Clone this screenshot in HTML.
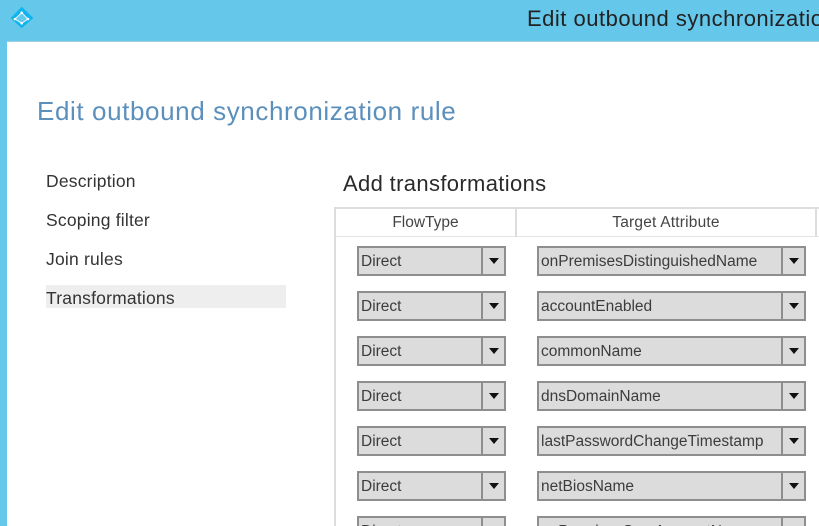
<!DOCTYPE html>
<html><head><meta charset="utf-8"><style>
html,body{margin:0;padding:0;width:819px;height:526px;overflow:hidden}
body{background:#fff;font-family:"Liberation Sans",sans-serif;color:#333}
#p{position:absolute;left:0;top:0;width:819px;height:526px;overflow:hidden;background:#fff;filter:blur(.35px)}
#p div{position:absolute;white-space:nowrap}
#p .c{box-sizing:border-box;height:30px;background:#dcdcdc;border:2px solid #8e8e8e}
#p .w1{left:357px;width:149px}
#p .w2{left:537px;width:269px}
#p .t{font-size:15.5px;line-height:27px;left:2px;top:0;color:#3c3c3c}
#p .d{top:0;bottom:0;width:2px;background:#8e8e8e}
#p .w1 .d{left:122px}
#p .w2 .d{left:242px}
#p .a{width:0;height:0;border-left:5px solid transparent;border-right:5px solid transparent;border-top:6px solid #111;top:10px}
#p .w1 .a{left:130px}
#p .w2 .a{left:250px}
#p .n{font-size:17.5px;letter-spacing:.2px;left:46px;color:#333;line-height:20px}
#p .h{top:214px;text-align:center;font-size:15.5px;line-height:18px;color:#444}
</style></head><body><div id="p">
<div style="left:0;top:0;width:819px;height:41px;background:#65c7ea"></div>
<div style="left:0;top:41px;width:7px;height:485px;background:#65c7ea"></div>
<div style="left:7px;top:41px;width:812px;height:1px;background:#a6cfdf"></div>
<svg style="position:absolute;left:10px;top:6px" width="24" height="24" viewBox="0 0 24 24"><path d="M11.700 .700L23.300 12 11.700 22.300 .700 12Z" fill="#0eb4ee"/><path d="M11.700 6.700L18 13 11.700 17.300 5 13Z" fill="#66c8ea" stroke="#e6f8ff" stroke-width="1"/><circle cx="11.700" cy="6.700" r="1.300" fill="#fff"/><circle cx="18" cy="13" r="1.300" fill="#fff"/><circle cx="11.700" cy="17.300" r="1.300" fill="#fff"/><circle cx="5" cy="13" r="1.300" fill="#fff"/></svg>
<div style="left:527px;top:6px;font-size:22px;line-height:26px;color:#222;letter-spacing:.5px">Edit outbound synchronization rule</div>
<div style="left:37px;top:94px;font-size:26px;line-height:34px;color:#5b8fbc;letter-spacing:.6px">Edit outbound synchronization rule</div>
<div style="left:46px;top:285px;width:240px;height:23px;background:#eee"></div>
<div class="n" style="top:170.500px">Description</div>
<div class="n" style="top:209.500px">Scoping filter</div>
<div class="n" style="top:248.500px">Join rules</div>
<div class="n" style="top:287.500px">Transformations</div>
<div style="left:343px;top:171px;font-size:22px;line-height:26px;color:#2a2a2a;letter-spacing:.35px">Add transformations</div>
<div style="left:334px;top:207px;width:485px;height:2px;background:#ddd"></div>
<div style="left:334px;top:207px;width:2px;height:319px;background:#ddd"></div>
<div style="left:336px;top:236px;width:483px;height:1px;background:#e4e4e4"></div>
<div style="left:515px;top:209px;width:2px;height:28px;background:#ddd"></div>
<div style="left:815px;top:209px;width:2px;height:28px;background:#ddd"></div>
<div class="h" style="left:336px;width:179px">FlowType</div>
<div class="h" style="left:517px;width:298px;letter-spacing:.2px">Target Attribute</div>

<div class="c w1" style="top:246px"><div class="t">Direct</div><div class="d"></div><div class="a"></div></div>
<div class="c w2" style="top:246px"><div class="t">onPremisesDistinguishedName</div><div class="d"></div><div class="a"></div></div>
<div class="c w1" style="top:291px"><div class="t">Direct</div><div class="d"></div><div class="a"></div></div>
<div class="c w2" style="top:291px"><div class="t">accountEnabled</div><div class="d"></div><div class="a"></div></div>
<div class="c w1" style="top:336px"><div class="t">Direct</div><div class="d"></div><div class="a"></div></div>
<div class="c w2" style="top:336px"><div class="t">commonName</div><div class="d"></div><div class="a"></div></div>
<div class="c w1" style="top:381px"><div class="t">Direct</div><div class="d"></div><div class="a"></div></div>
<div class="c w2" style="top:381px"><div class="t">dnsDomainName</div><div class="d"></div><div class="a"></div></div>
<div class="c w1" style="top:426px"><div class="t">Direct</div><div class="d"></div><div class="a"></div></div>
<div class="c w2" style="top:426px"><div class="t">lastPasswordChangeTimestamp</div><div class="d"></div><div class="a"></div></div>
<div class="c w1" style="top:471px"><div class="t">Direct</div><div class="d"></div><div class="a"></div></div>
<div class="c w2" style="top:471px"><div class="t">netBiosName</div><div class="d"></div><div class="a"></div></div>
<div class="c w1" style="top:516px"><div class="t">Direct</div><div class="d"></div><div class="a"></div></div>
<div class="c w2" style="top:516px"><div class="t">onPremisesSamAccountName</div><div class="d"></div><div class="a"></div></div>
</div></body></html>
